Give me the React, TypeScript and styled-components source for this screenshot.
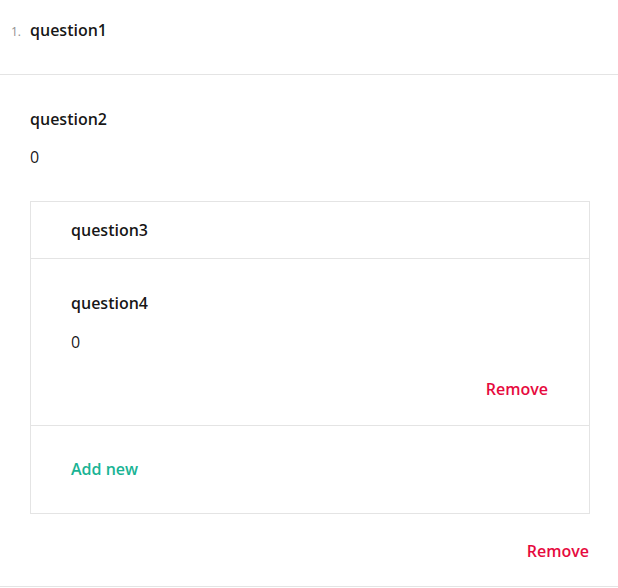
import React from "react";
import styled, { createGlobalStyle } from "styled-components";

const GlobalStyle = createGlobalStyle`
  html, body {
    margin: 0;
    padding: 0;
    background: #ffffff;
  }
  body {
    font-family: "Open Sans", "Liberation Sans", sans-serif;
    font-size: 16px;
    line-height: 24px;
    color: rgba(0, 0, 0, 0.91);
  }
`

const Page = styled.div`
  width: 618px;
`

const TopHeader = styled.div`
  display: flex;
  align-items: baseline;
  padding: 18px 0 30px 11px;
  border-bottom: 1px solid #e4e4e4;
`

const Number = styled.span`
  width: 19px;
  font-size: 12px;
  color: #909090;
`

const Title = styled.div`
  font-weight: 600;
`

const Section = styled.div`
  padding: 32px 28px 23px 30px;
  border-bottom: 1px solid #e4e4e4;
  display: flex;
  flex-direction: column;
`

const Value = styled.div<{ gap: number }>`
  margin-top: ${(p) => p.gap}px;
`

const Panel = styled.div`
  margin-top: 32px;
  border: 1px solid #e4e4e4;
`

const PanelHeader = styled.div`
  padding: 16px 40px;
  border-bottom: 1px solid #e4e4e4;
`

const PanelItem = styled.div`
  padding: 32px 41px 24px 40px;
  display: flex;
  flex-direction: column;
  border-bottom: 1px solid #e4e4e4;
`

const PanelFooter = styled.div`
  padding: 31px 40px 32px;
`

const TextButton = styled.span<{ tone: "red" | "green" }>`
  font-weight: 600;
  cursor: pointer;
  color: ${(p) => (p.tone === "red" ? "#e60a3e" : "#19b394")};
`

const RightRow = styled.div<{ gap: number; inset?: number }>`
  display: flex;
  justify-content: flex-end;
  margin-top: ${(p) => p.gap}px;
  padding-right: ${(p) => p.inset ?? 0}px;
`

export default function App() {
  return (
    <Page>
      <GlobalStyle />
      <TopHeader>
        <Number>1.</Number>
        <Title>question1</Title>
      </TopHeader>
      <Section>
        <Title>question2</Title>
        <Value gap={14}>0</Value>
        <Panel>
          <PanelHeader>
            <Title>question3</Title>
          </PanelHeader>
          <PanelItem>
            <Title>question4</Title>
            <Value gap={15}>0</Value>
            <RightRow gap={23}>
              <TextButton tone="red">Remove</TextButton>
            </RightRow>
          </PanelItem>
          <PanelFooter>
            <TextButton tone="green">Add new</TextButton>
          </PanelFooter>
        </Panel>
        <RightRow gap={25} inset={1}>
          <TextButton tone="red">Remove</TextButton>
        </RightRow>
      </Section>
    </Page>
  )
}
